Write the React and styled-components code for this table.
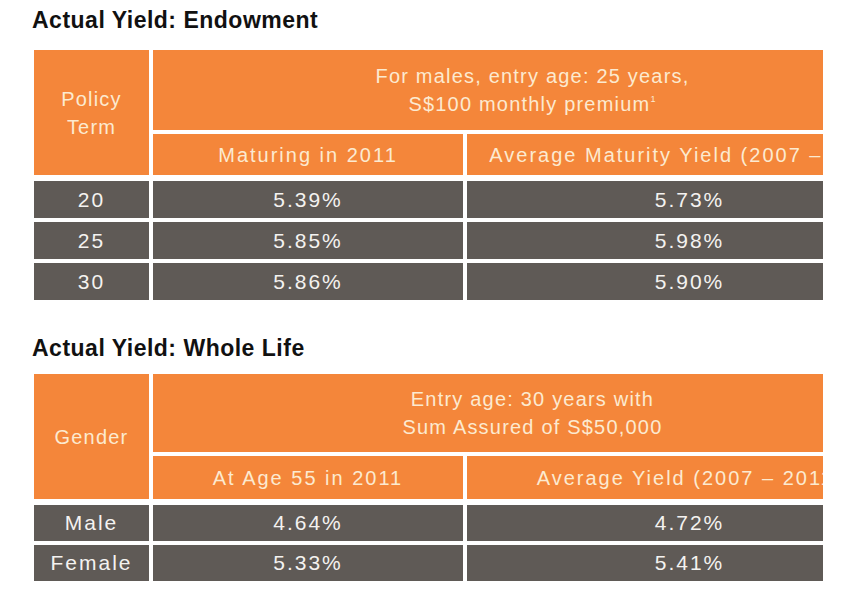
import React from 'react'
import styled, { createGlobalStyle } from 'styled-components'

const GlobalStyle = createGlobalStyle`
  html, body {
    margin: 0;
    padding: 0;
    background: #ffffff;
  }
`

const Page = styled.div`
  width: 855px;
  height: 615px;
  padding: 7px 0 0 34px;
  box-sizing: border-box;
  font-family: "Liberation Sans", Arial, sans-serif;
`

const Title = styled.h2`
  margin: ${p => p.$top || 0}px 0 ${p => p.$bottom || 0}px -2px;
  font-size: 23px;
  line-height: 26px;
  font-weight: bold;
  color: #111;
  letter-spacing: 0.5px;
`

const Clip = styled.div`
  width: 789px;
  overflow: hidden;
`

const Grid = styled.div`
  display: grid;
  width: 878px;
  grid-template-columns: 115px 310px 445px;
  grid-template-rows: ${p => p.$rows};
  column-gap: 4px;
  row-gap: 4px;
  background: #ffffff;
`

const HeadCell = styled.div`
  background: #f4863a;
  color: #fcead0;
  display: flex;
  align-items: center;
  justify-content: center;
  text-align: center;
  font-size: 20px;
  line-height: 28px;
  letter-spacing: ${p => (p.$wide ? 2 : 1.2)}px;
  white-space: nowrap;
  grid-column: ${p => p.$col || 'auto'};
  grid-row: ${p => p.$row || 'auto'};
  margin-bottom: ${p => p.$gapBelow || 0}px;
`

const DataCell = styled.div`
  background: #5f5a56;
  color: #f4f2f0;
  display: flex;
  align-items: center;
  justify-content: center;
  font-size: 21px;
  letter-spacing: 2px;
`

const Sup = styled.sup`
  font-size: 9px;
  vertical-align: 9px;
  line-height: 0;
`

function YieldTable({ rows, sideLabel, topLabel, sub1, sub2, data }) {
  return (
    <Clip>
      <Grid $rows={rows}>
        <HeadCell $col="1" $row="1 / span 2" $gapBelow={2}>{sideLabel}</HeadCell>
        <HeadCell $col="2 / span 2" $row="1">{topLabel}</HeadCell>
        <HeadCell $col="2" $row="2" $gapBelow={2} $wide>{sub1}</HeadCell>
        <HeadCell $col="3" $row="2" $gapBelow={2} $wide>{sub2}</HeadCell>
        {data.map(r => (
          <React.Fragment key={r[0]}>
            <DataCell>{r[0]}</DataCell>
            <DataCell>{r[1]}</DataCell>
            <DataCell>{r[2]}</DataCell>
          </React.Fragment>
        ))}
      </Grid>
    </Clip>
  )
}

export default function App() {
  return (
    <Page>
      <GlobalStyle />
      <Title $bottom={17}>Actual Yield: Endowment</Title>
      <YieldTable
        rows="80px 43px 37px 37px 37px"
        sideLabel={<span>Policy<br />Term</span>}
        topLabel={<span>For males, entry age: 25 years,<br />S$100 monthly premium<Sup>1</Sup></span>}
        sub1="Maturing in 2011"
        sub2="Average Maturity Yield (2007 – 2011)"
        data={[
          ['20', '5.39%', '5.73%'],
          ['25', '5.85%', '5.98%'],
          ['30', '5.86%', '5.90%'],
        ]}
      />
      <Title $top={35} $bottom={13}>Actual Yield: Whole Life</Title>
      <YieldTable
        rows="78px 45px 36px 36px"
        sideLabel="Gender"
        topLabel={<span>Entry age: 30 years with<br />Sum Assured of S$50,000</span>}
        sub1="At Age 55 in 2011"
        sub2="Average Yield (2007 – 2011)"
        data={[
          ['Male', '4.64%', '4.72%'],
          ['Female', '5.33%', '5.41%'],
        ]}
      />
    </Page>
  )
}
